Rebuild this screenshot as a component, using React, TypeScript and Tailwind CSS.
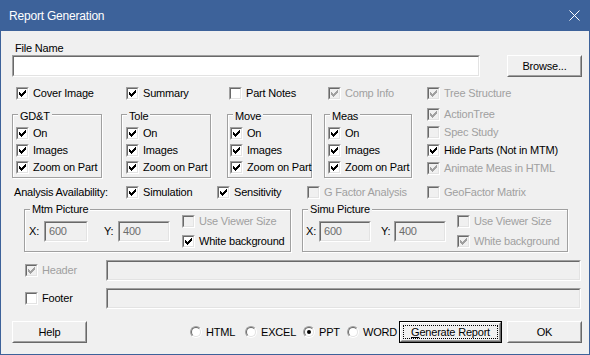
import React from "react";

type CheckProps = {
  label: string;
  checked?: boolean;
  disabled?: boolean;
  className?: string;
};

// classic 7x7 check glyph, pixel by pixel
const CHECK_PIXELS: [number, number][] = [
  [6, 0],
  [5, 1], [6, 1],
  [0, 2], [4, 2], [5, 2], [6, 2],
  [0, 3], [1, 3], [3, 3], [4, 3], [5, 3],
  [0, 4], [1, 4], [2, 4], [3, 4], [4, 4],
  [1, 5], [2, 5], [3, 5],
  [2, 6],
];

function Box({ checked, disabled }: { checked?: boolean; disabled?: boolean }) {
  return (
    <span className="relative inline-block h-[13px] w-[13px] shrink-0 border border-t-[#a0a0a0] border-l-[#a0a0a0] border-r-white border-b-white">
      <span
        className={`block h-full w-full border border-t-[#696969] border-l-[#696969] border-r-[#e3e3e3] border-b-[#e3e3e3] ${
          disabled ? "bg-[#f0f0f0]" : "bg-white"
        }`}
      />
      {checked ? (
        <svg className="absolute left-[2px] top-[2px]" width="7" height="7" viewBox="0 0 7 7" shapeRendering="crispEdges">
          {CHECK_PIXELS.map(([x, y]) => (
            <rect key={`${x}-${y}`} x={x} y={y} width="1" height="1" fill={disabled ? "#a0a0a0" : "#000"} />
          ))}
        </svg>
      ) : null}
    </span>
  );
}

function Check({ label, checked, disabled, className = "" }: CheckProps) {
  return (
    <div className={`flex h-[13px] items-center gap-[4px] ${disabled ? "text-[#a0a0a0]" : ""} ${className}`}>
      <Box checked={checked} disabled={disabled} />
      <span className="whitespace-nowrap leading-[13px]">{label}</span>
    </div>
  );
}

function Radio({ label, checked, className = "" }: { label: string; checked?: boolean; className?: string }) {
  return (
    <div className={`flex items-center gap-[4px] ${className}`}>
      <span className="relative inline-block h-[12px] w-[12px] shrink-0 rounded-full border border-t-[#a0a0a0] border-l-[#a0a0a0] border-r-white border-b-white">
        <span className="block h-full w-full rounded-full border border-t-[#696969] border-l-[#696969] border-r-[#e3e3e3] border-b-[#e3e3e3] bg-white" />
        {checked ? <span className="absolute left-[3px] top-[3px] h-[4px] w-[4px] rounded-full bg-black" /> : null}
      </span>
      <span className="whitespace-nowrap leading-[13px]">{label}</span>
    </div>
  );
}

function Sunken({ children, white, className = "" }: { children?: React.ReactNode; white?: boolean; className?: string }) {
  return (
    <div className={`border border-t-[#a0a0a0] border-l-[#a0a0a0] border-r-white border-b-white ${className}`}>
      <div
        className={`flex h-full items-center border border-t-[#696969] border-l-[#696969] border-r-[#e3e3e3] border-b-[#e3e3e3] pl-[3px] text-[#6d6d6d] ${
          white ? "bg-white" : "bg-[#f0f0f0]"
        }`}
      >
        {children}
      </div>
    </div>
  );
}

function Button({ children, focused, className = "" }: { children: React.ReactNode; focused?: boolean; className?: string }) {
  return (
    <div className={`${focused ? "border border-black" : ""} ${className}`}>
      <div className="h-full border border-t-white border-l-white border-r-[#696969] border-b-[#696969]">
        <div className="relative flex h-full items-center justify-center border border-t-[#f0f0f0] border-l-[#f0f0f0] border-r-[#a0a0a0] border-b-[#a0a0a0] bg-[#f0f0f0]">
          {focused ? <span className="absolute inset-[1px] border border-dotted border-black" /> : null}
          <span className="relative leading-[13px]">{children}</span>
        </div>
      </div>
    </div>
  );
}

function Group({
  title,
  legendClass,
  className = "",
  children,
}: {
  title: string;
  legendClass: string;
  className?: string;
  children: React.ReactNode;
}) {
  return (
    <div className={`relative border border-[#a0a0a0] shadow-[inset_1px_1px_0_#fff,1px_1px_0_#fff] ${className}`}>
      <span className={`absolute left-[5px] bg-[#f0f0f0] px-[2px] leading-[13px] ${legendClass}`}>{title}</span>
      {children}
    </div>
  );
}

function OptionGroup({ title, className, pad }: { title: string; className: string; pad: string }) {
  return (
    <Group title={title} legendClass="-top-[5px]" className={`h-[64px] ${className}`}>
      <div className={`flex flex-col gap-[4px] pt-[12px] ${pad}`}>
        <Check label="On" checked />
        <Check label="Images" checked />
        <Check label="Zoom on Part" checked />
      </div>
    </Group>
  );
}

export default function App() {
  return (
    <div className="h-[355px] w-[590px] bg-[#3d629a] font-['Liberation_Sans',Arial,sans-serif] text-[11px] tracking-[-0.2px] text-black select-none">
      <div className="flex h-[31px] items-center justify-between pl-[9px] pr-[10px] text-white">
        <span className="text-[12px] tracking-[-0.2px]">Report Generation</span>
        <svg width="11" height="11" viewBox="0 0 11 11">
          <path d="M0.5 0.5 L10.5 10.5 M10.5 0.5 L0.5 10.5" stroke="#fff" strokeWidth="1" />
        </svg>
      </div>

      <div className="mx-[1px] flex h-[323px] flex-col bg-[#f0f0f0] pl-[11px]">
        <div className="mt-[11px] h-[13px] pl-[3px] leading-[13px]">File Name</div>
        <div className="flex">
          <Sunken white className="h-[22px] w-[468px]" />
          <Button className="ml-[27px] h-[22px] w-[75px]">Browse...</Button>
        </div>

        <div className="mt-[10px] flex h-[13px] items-center pl-[4px]">
          <Check label="Cover Image" checked className="w-[110px]" />
          <Check label="Summary" checked className="w-[103px]" />
          <Check label="Part Notes" className="w-[99px]" />
          <Check label="Comp Info" checked disabled className="w-[99px]" />
          <Check label="Tree Structure" checked disabled />
        </div>

        <div className="mt-[5px] flex items-start">
          <OptionGroup title="GD&T" className="mt-[9px] w-[90px]" pad="pl-[3px]" />
          <OptionGroup title="Tole" className="ml-[19px] mt-[9px] w-[90px]" pad="pl-[4px]" />
          <OptionGroup title="Move" className="ml-[16px] mt-[9px] w-[85px]" pad="pl-[2px]" />
          <OptionGroup title="Meas" className="ml-[12px] mt-[9px] w-[88px]" pad="pl-[3px]" />
          <div className="ml-[15px] flex flex-col">
            <div className="flex h-[18px] items-center">
              <Check label="ActionTree" checked disabled />
            </div>
            <div className="flex h-[18px] items-center">
              <Check label="Spec Study" disabled />
            </div>
            <div className="flex h-[18px] items-center">
              <Check label="Hide Parts (Not in MTM)" checked />
            </div>
            <div className="flex h-[18px] items-center">
              <Check label="Animate Meas in HTML" checked disabled />
            </div>
          </div>
        </div>

        <div className="mt-[8px] flex h-[13px] items-center pl-[2px]">
          <span className="w-[112px] whitespace-nowrap leading-[13px]">Analysis Availability:</span>
          <Check label="Simulation" checked className="w-[91px]" />
          <Check label="Sensitivity" checked className="w-[90px]" />
          <Check label="G Factor Analysis" disabled className="w-[120px]" />
          <Check label="GeoFactor Matrix" disabled />
        </div>

        <div className="mt-[10px] flex">
          <Group title="Mtm Picture" legendClass="-top-[7px]" className="ml-[12px] h-[43px] w-[267px]">
            <div className="flex items-start pl-[4px]">
              <div className="mt-[11px] flex h-[21px] items-center">
                <span className="w-[15px] leading-[13px]">X:</span>
                <Sunken className="h-[21px] w-[44px]">600</Sunken>
                <span className="w-[30px] pl-[16px] leading-[13px]">Y:</span>
                <Sunken className="h-[21px] w-[52px]">400</Sunken>
              </div>
              <div className="ml-[12px] mt-[5px] flex flex-col gap-[7px]">
                <Check label="Use Viewer Size" disabled />
                <Check label="White background" checked />
              </div>
            </div>
          </Group>
          <Group title="Simu Picture" legendClass="-top-[7px]" className="ml-[11px] h-[43px] w-[266px]">
            <div className="flex items-start pl-[3px]">
              <div className="mt-[11px] flex h-[21px] items-center">
                <span className="w-[13px] leading-[13px]">X:</span>
                <Sunken className="h-[21px] w-[52px]">600</Sunken>
                <span className="w-[23px] pl-[10px] leading-[13px]">Y:</span>
                <Sunken className="h-[21px] w-[52px]">400</Sunken>
              </div>
              <div className="ml-[11px] mt-[5px] flex flex-col gap-[7px]">
                <Check label="Use Viewer Size" disabled />
                <Check label="White background" checked disabled />
              </div>
            </div>
          </Group>
        </div>

        <div className="mt-[8px] flex h-[21px] items-center pl-[13px]">
          <Check label="Header" checked disabled className="w-[81px]" />
          <Sunken className="h-[21px] w-[475px]" />
        </div>
        <div className="mt-[7px] flex h-[21px] items-center pl-[13px]">
          <Check label="Footer" className="w-[81px]" />
          <Sunken className="h-[21px] w-[475px]" />
        </div>

        <div className="mt-[12px] flex h-[22px] items-center">
          <Button className="h-[22px] w-[75px]">Help</Button>
          <div className="ml-[103px] flex items-center">
            <Radio label="HTML" className="w-[55px]" />
            <Radio label="EXCEL" className="w-[58px]" />
            <Radio label="PPT" checked className="w-[44px]" />
            <Radio label="WORD" className="w-[52px]" />
          </div>
          <Button focused className="h-[22px] w-[103px]">
            <span className="underline underline-offset-[1px]">G</span>enerate Report
          </Button>
          <Button className="ml-[5px] h-[22px] w-[75px]">OK</Button>
        </div>
      </div>
    </div>
  );
}
